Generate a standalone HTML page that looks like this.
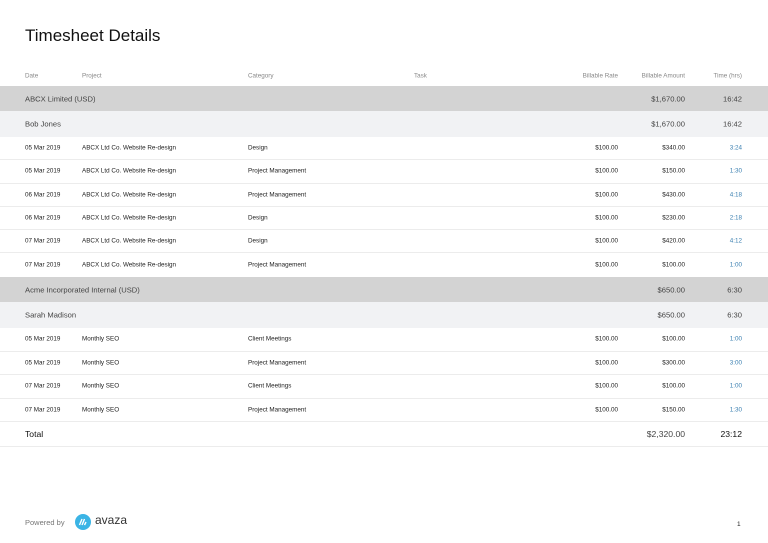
<!DOCTYPE html>
<html><head><style>
body{margin:0;width:768px;height:543px;background:#fff;font-family:"Liberation Sans",sans-serif;position:relative;overflow:hidden}
h1{position:absolute;left:25px;top:26px;margin:0;font-size:17px;font-weight:normal;color:#111}
.r{position:absolute;left:0;width:768px;box-sizing:border-box}
.r span{position:absolute;top:50%;transform:translateY(-50%);white-space:nowrap}
.d span{font-size:6.3px;color:#222}
.hd span{font-size:6.3px;color:#888}
.g{background:#d3d3d3}.s{background:#f1f2f4}
.g span,.s span{font-size:7.6px;color:#444}
.d{border-bottom:1px solid #ececec}
.c1{left:25px}.c2{left:82px}.c3{left:248px}.c4{left:414px}
.c5{right:150px}.c6{right:83px}.c7{right:26px}
.t{color:#3a7fb0!important}
</style></head><body>
<h1>Timesheet Details</h1>
<div class="r hd" style="top:70px;height:12px"><span class="c1">Date</span><span class="c2">Project</span><span class="c3">Category</span><span class="c4">Task</span><span class="c5">Billable Rate</span><span class="c6">Billable Amount</span><span class="c7">Time (hrs)</span></div>
<div class="r g" style="top:86px;height:25px"><span class="c1">ABCX Limited (USD)</span><span class="c6">$1,670.00</span><span class="c7">16:42</span></div>
<div class="r s" style="top:111px;height:26px"><span class="c1">Bob Jones</span><span class="c6">$1,670.00</span><span class="c7">16:42</span></div>
<div class="r d" style="top:137px;height:23.3px"><span class="c1">05 Mar 2019</span><span class="c2">ABCX Ltd Co. Website Re-design</span><span class="c3">Design</span><span class="c5">$100.00</span><span class="c6">$340.00</span><span class="c7 t">3:24</span></div>
<div class="r d" style="top:160.3px;height:23.3px"><span class="c1">05 Mar 2019</span><span class="c2">ABCX Ltd Co. Website Re-design</span><span class="c3">Project Management</span><span class="c5">$100.00</span><span class="c6">$150.00</span><span class="c7 t">1:30</span></div>
<div class="r d" style="top:183.6px;height:23.3px"><span class="c1">06 Mar 2019</span><span class="c2">ABCX Ltd Co. Website Re-design</span><span class="c3">Project Management</span><span class="c5">$100.00</span><span class="c6">$430.00</span><span class="c7 t">4:18</span></div>
<div class="r d" style="top:206.9px;height:23.3px"><span class="c1">06 Mar 2019</span><span class="c2">ABCX Ltd Co. Website Re-design</span><span class="c3">Design</span><span class="c5">$100.00</span><span class="c6">$230.00</span><span class="c7 t">2:18</span></div>
<div class="r d" style="top:230.2px;height:23.3px"><span class="c1">07 Mar 2019</span><span class="c2">ABCX Ltd Co. Website Re-design</span><span class="c3">Design</span><span class="c5">$100.00</span><span class="c6">$420.00</span><span class="c7 t">4:12</span></div>
<div class="r d" style="top:253.5px;height:23.5px;border:0"><span class="c1">07 Mar 2019</span><span class="c2">ABCX Ltd Co. Website Re-design</span><span class="c3">Project Management</span><span class="c5">$100.00</span><span class="c6">$100.00</span><span class="c7 t">1:00</span></div>
<div class="r g" style="top:277px;height:25px"><span class="c1">Acme Incorporated Internal (USD)</span><span class="c6">$650.00</span><span class="c7">6:30</span></div>
<div class="r s" style="top:302px;height:26px"><span class="c1">Sarah Madison</span><span class="c6">$650.00</span><span class="c7">6:30</span></div>
<div class="r d" style="top:328px;height:23.5px"><span class="c1">05 Mar 2019</span><span class="c2">Monthly SEO</span><span class="c3">Client Meetings</span><span class="c5">$100.00</span><span class="c6">$100.00</span><span class="c7 t">1:00</span></div>
<div class="r d" style="top:351.5px;height:23.5px"><span class="c1">05 Mar 2019</span><span class="c2">Monthly SEO</span><span class="c3">Project Management</span><span class="c5">$100.00</span><span class="c6">$300.00</span><span class="c7 t">3:00</span></div>
<div class="r d" style="top:375px;height:23.5px"><span class="c1">07 Mar 2019</span><span class="c2">Monthly SEO</span><span class="c3">Client Meetings</span><span class="c5">$100.00</span><span class="c6">$100.00</span><span class="c7 t">1:00</span></div>
<div class="r d" style="top:398.5px;height:23.5px"><span class="c1">07 Mar 2019</span><span class="c2">Monthly SEO</span><span class="c3">Project Management</span><span class="c5">$100.00</span><span class="c6">$150.00</span><span class="c7 t">1:30</span></div>
<div class="r d" style="top:422px;height:25px"><span class="c1" style="font-size:8.6px;color:#111">Total</span><span class="c6" style="font-size:8.6px;color:#444">$2,320.00</span><span class="c7" style="font-size:8.6px;color:#111">23:12</span></div>
<div style="position:absolute;left:25px;top:518px;font-size:7.5px;color:#777">Powered by</div>
<svg style="position:absolute;left:75px;top:514px" width="16" height="16" viewBox="0 0 16 16"><circle cx="8" cy="8" r="8" fill="#3bb4e5"/><path d="M4.5 11 L7 5 M7 11 L9.5 5 M9.5 11 L11 8" stroke="#fff" stroke-width="1.4" fill="none"/></svg>
<div style="position:absolute;left:95px;top:513px;font-size:12px;color:#333">avaza</div>
<div style="position:absolute;left:737px;top:521px;font-size:6.5px;color:#222">1</div>
</body></html>
